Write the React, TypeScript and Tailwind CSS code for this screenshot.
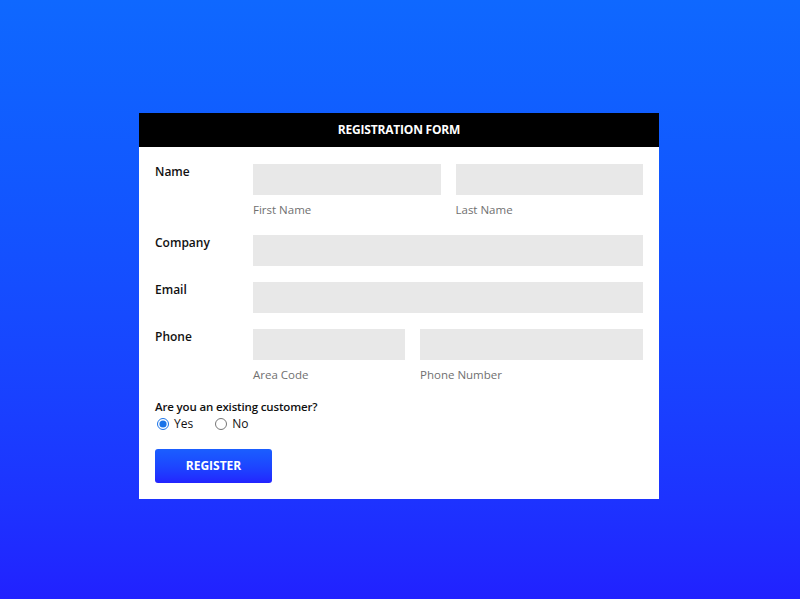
import { useState } from 'react'

const font = { fontFamily: '"Open Sans", "Liberation Sans", sans-serif' }

function Field({ hint, className = '' }: { hint?: string; className?: string }) {
  return (
    <div className={`flex flex-col ${className}`}>
      <input className="h-[31px] w-full bg-[#e8e8e8] outline-none px-2 text-[12px]" />
      {hint && <span className="mt-[6px] text-[11.5px] leading-[18px] text-[#707070]">{hint}</span>}
    </div>
  )
}

function Row({ label, children }: { label: string; children: React.ReactNode }) {
  return (
    <div className="flex">
      <label className="w-[98px] shrink-0 text-[12px] leading-[16px] font-semibold text-[#111]">{label}</label>
      <div className="flex flex-1 gap-[15px]">{children}</div>
    </div>
  )
}

export default function App() {
  const [existing, setExisting] = useState('yes')

  return (
    <div className="min-h-[599px] w-full bg-gradient-to-b from-[#0f68ff] to-[#2121ff] pt-[113px]" style={font}>
      <form className="ml-[139px] w-[520px] bg-white" onSubmit={e => e.preventDefault()}>
        {/* header */}
        <div className="h-[34px] bg-black flex items-center justify-center">
          <h1 className="text-white text-[12px] font-bold tracking-[-0.2px]">REGISTRATION FORM</h1>
        </div>

        <div className="px-4 pt-[17px] pb-4 flex flex-col gap-4">
          <Row label="Name">
            <Field hint="First Name" className="flex-1" />
            <Field hint="Last Name" className="flex-1" />
          </Row>
          <Row label="Company">
            <Field className="flex-1" />
          </Row>
          <Row label="Email">
            <Field className="flex-1" />
          </Row>
          <Row label="Phone">
            <Field hint="Area Code" className="w-[152px]" />
            <Field hint="Phone Number" className="flex-1" />
          </Row>

          {/* customer question */}
          <div className="-mt-[1px]">
            <p className="text-[11.5px] leading-[16px] font-semibold tracking-[-0.15px] text-[#111]">Are you an existing customer?</p>
            <div className="flex items-center gap-[22px] text-[12px] text-[#111]">
              <label className="flex items-center gap-[5px]">
                <input
                  type="radio"
                  name="existing"
                  checked={existing === 'yes'}
                  onChange={() => setExisting('yes')}
                  className="m-0 ml-[2px] w-[12px] h-[12px] accent-[#1a73e8]"
                />
                Yes
              </label>
              <label className="flex items-center gap-[5px]">
                <input
                  type="radio"
                  name="existing"
                  checked={existing === 'no'}
                  onChange={() => setExisting('no')}
                  className="m-0 w-[12px] h-[12px] accent-[#1a73e8]"
                />
                No
              </label>
            </div>
          </div>

          <button
            type="submit"
            className="w-[117px] h-[34px] rounded-[3px] bg-gradient-to-b from-[#1b5eff] to-[#2323ff] text-white text-[12px] font-bold"
          >
            REGISTER
          </button>
        </div>
      </form>
    </div>
  )
}
